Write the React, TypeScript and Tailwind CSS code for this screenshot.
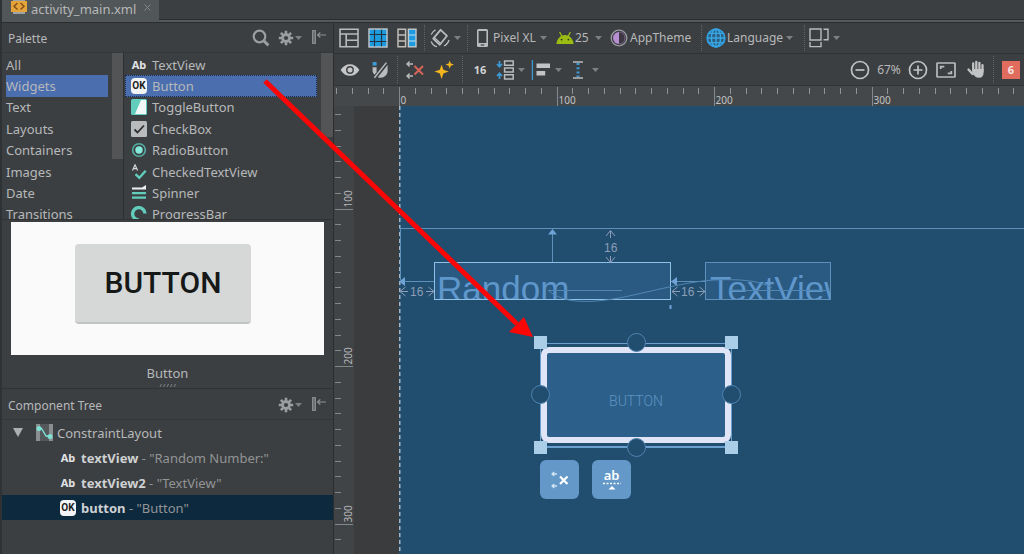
import React from "react";
import { LuX } from "react-icons/lu";

const STEP = 15.75;

const categories = ["All", "Widgets", "Text", "Layouts", "Containers", "Images", "Date", "Transitions"];

function AbIcon() {
  return <span className="w-4 text-center text-[11px] leading-4 font-bold text-[#e0e2e4]">Ab</span>;
}

function OkIcon() {
  return (
    <span className="h-4 w-4 rounded-sm bg-[#f2f4f5] text-center font-['Roboto',sans-serif] text-[10px] leading-4 font-bold text-[#1c1c1c]">
      OK
    </span>
  );
}

function ToggleIcon() {
  return (
    <svg width="16" height="16" viewBox="0 0 16 16" aria-hidden="true">
      <rect width="16" height="16" rx="1.5" fill="#62cdbc" />
      <path d="M10 1h5v14H4z" fill="#f1f8f7" />
    </svg>
  );
}

function CheckBoxIcon() {
  return (
    <svg width="16" height="16" viewBox="0 0 16 16" aria-hidden="true">
      <rect width="16" height="16" rx="1.5" fill="#b9bbbc" />
      <path d="M3.5 8.5l3 3 6.5-7" fill="none" stroke="#2e3032" strokeWidth="1.8" />
    </svg>
  );
}

function RadioIcon() {
  return (
    <svg width="16" height="16" viewBox="0 0 16 16" aria-hidden="true">
      <circle cx="8" cy="8" r="6.3" fill="none" stroke="#55aea4" strokeWidth="1.6" />
      <circle cx="8" cy="8" r="3.7" fill="#84eadb" />
    </svg>
  );
}

function CheckedTextIcon() {
  return (
    <svg width="16" height="16" viewBox="0 0 16 16" aria-hidden="true">
      <path d="M1.5 6.5L4 .8l2.6 5.7M2.4 4.6h3.3" fill="none" stroke="#d5d7d8" strokeWidth="1.2" />
      <path d="M4.5 10.2l3.8 3.6 6.4-7" fill="none" stroke="#62cdbc" strokeWidth="2.4" />
    </svg>
  );
}

function SpinnerIcon() {
  return (
    <svg width="16" height="16" viewBox="0 0 16 16" aria-hidden="true">
      <path d="M1 2.500h10l4-2.500v4.500H1z" fill="#eef0f0" />
      <path d="M1 7h14v2.2H1zM1 11.6h14v2.2H1z" fill="#62cdbc" />
    </svg>
  );
}

function ProgressIcon() {
  return (
    <svg width="16" height="16" viewBox="0 0 16 16" aria-hidden="true">
      <path d="M14 7.5A6.2 6.2 0 1 0 8 14" fill="none" stroke="#62cdbc" strokeWidth="3.4" />
    </svg>
  );
}

const widgets = [
  { name: "TextView", icon: <AbIcon /> },
  { name: "Button", icon: <OkIcon /> },
  { name: "ToggleButton", icon: <ToggleIcon /> },
  { name: "CheckBox", icon: <CheckBoxIcon /> },
  { name: "RadioButton", icon: <RadioIcon /> },
  { name: "CheckedTextView", icon: <CheckedTextIcon /> },
  { name: "Spinner", icon: <SpinnerIcon /> },
  { name: "ProgressBar", icon: <ProgressIcon /> },
];

const tree = [
  { id: "textView", label: "Random Number:", icon: <AbIcon /> },
  { id: "textView2", label: "TextView", icon: <AbIcon /> },
  { id: "button", label: "Button", icon: <OkIcon /> },
];

function Caret() {
  return (
    <svg width="7" height="4" viewBox="0 0 7 4" className="shrink-0" aria-hidden="true">
      <path d="M0 0h7L3.5 4z" fill="#7d8082" />
    </svg>
  );
}

function GearButton() {
  return (
    <button type="button" aria-label="Settings" className="flex items-center gap-px">
      <svg width="16" height="16" viewBox="0 0 16 16" aria-hidden="true">
        <g stroke="#9b9ea0" strokeWidth="2.6">
          <path d="M8 .8v14.4M.8 8h14.4M2.9 2.9l10.2 10.2M13.1 2.9L2.9 13.1" />
        </g>
        <circle cx="8" cy="8" r="4.8" fill="#9b9ea0" />
        <circle cx="8" cy="8" r="2.1" fill="#3c3f41" />
      </svg>
      <Caret />
    </button>
  );
}

function HideButton() {
  return (
    <button type="button" aria-label="Hide">
      <svg width="14" height="14" viewBox="0 0 14 14" aria-hidden="true">
        <rect x=".6" y=".6" width="2.8" height="12.8" fill="#6b6e70" stroke="#909395" strokeWidth="1" />
        <path d="M5.5 5H14M8.3 2.4L5.6 5l2.7 2.6" fill="none" stroke="#909395" strokeWidth="1.2" />
      </svg>
    </button>
  );
}

function Separator() {
  return (
    <div className="flex w-[6px] shrink-0 justify-center self-stretch py-[2px]">
      <div className="border-l border-dotted border-[#606365]" />
    </div>
  );
}

function Tool({ label, className, children }: { label: string; className: string; children: React.ReactNode }) {
  return (
    <button type="button" aria-label={label} className={`flex shrink-0 items-center ${className}`}>
      {children}
    </button>
  );
}

function ConfigBar() {
  return (
    <div className="flex h-[31px] shrink-0 items-center border-b border-[#303234]">
      <Tool label="Design" className="w-[29px] justify-center">
        <svg width="20" height="20" viewBox="0 0 20 20" fill="none" stroke="#b9bbbc" strokeWidth="1.6">
          <path d="M1 1.2h18v17.6H1zM1 6h18M7.2 6v12.8M7.2 12.2H19" />
        </svg>
      </Tool>
      <Tool label="Blueprint" className="w-[29px] justify-center">
        <svg width="20" height="20" viewBox="0 0 20 20">
          <rect x="1" y="1" width="18" height="18" fill="#1d9be0" stroke="#c3c9cc" strokeWidth="1.4" />
          <path d="M6.5 1.7v16.6M13.5 1.7v16.6M1.7 6.5h16.6M1.7 13.5h16.6" stroke="#24323c" strokeWidth="1.1" />
        </svg>
      </Tool>
      <Tool label="Design and blueprint" className="w-[29px] justify-center">
        <svg width="20" height="20" viewBox="0 0 20 20" fill="none">
          <path d="M1 1.2h7.6v17.6H1zM1 7h7.6M1 13h7.6" stroke="#c1beb8" strokeWidth="1.5" />
          <rect x="11.4" y="1.2" width="7.6" height="17.6" fill="#1d9be0" stroke="#c3c9cc" strokeWidth="1.4" />
          <path d="M12 7h6.4M12 13h6.4" stroke="#c3e3f5" strokeWidth="1.2" />
        </svg>
      </Tool>
      <Separator />
      <Tool label="Orientation" className="w-[37px] gap-1 pl-[3px]">
        <svg width="20" height="20" viewBox="0 0 20 20" fill="none" stroke="#b9bbbc">
          <path d="M10.6 1.8l6.4 6-7.2 9-6.6-6.2z" strokeWidth="1.8" strokeLinejoin="round" />
          <path d="M4.2 9.6l6.4 6" strokeWidth="1.4" />
          <path d="M5.6 1.8A9 9 0 0 0 1.2 6.6M19 12a9 9 0 0 1-5 6M1.2 13.4c1 2.7 3 4.6 5.8 5.2" strokeWidth="1.3" />
        </svg>
        <Caret />
      </Tool>
      <Separator />
      <Tool label="Device" className="w-[84px] gap-1 pl-[6px]">
        <svg width="13" height="20" viewBox="0 0 13 20" className="shrink-0">
          <rect x="1" y="1" width="11" height="18" rx="1.6" fill="#b9bbbc" />
          <rect x="2.6" y="3" width="7.8" height="12" fill="#3c3f41" />
          <rect x="4.8" y="16.4" width="3.4" height="1.2" fill="#3c3f41" />
        </svg>
        <span>Pixel XL</span>
        <Caret />
      </Tool>
      <Tool label="API level" className="w-[54px] gap-px pl-[2px]">
        <svg width="18" height="14" viewBox="0 0 18 14" className="shrink-0">
          <path d="M.4 13C.8 8 4.4 4 9 4s8.2 4 8.6 9z" fill="#9bbc13" />
          <path d="M3.6 1l2.2 4M14.4 1l-2.2 4" stroke="#9bbc13" strokeWidth="1.3" />
          <circle cx="5.6" cy="8.6" r=".9" fill="#32351f" />
          <circle cx="12.4" cy="8.6" r=".9" fill="#32351f" />
        </svg>
        <span>25</span>
        <span className="pl-[5px]"><Caret /></span>
      </Tool>
      <Tool label="Theme" className="w-[90px] gap-[2px] pl-[2px]">
        <svg width="18" height="18" viewBox="0 0 18 18" className="shrink-0">
          <circle cx="9" cy="9" r="7.8" fill="#3c3742" stroke="#979aa0" strokeWidth="1.3" />
          <path d="M9 3a6 6 0 0 0 0 12z" fill="#b58fd0" />
          <path d="M9 3a6 6 0 0 1 0 12" fill="none" stroke="#75627f" strokeWidth="1" />
        </svg>
        <span>AppTheme</span>
      </Tool>
      <Separator />
      <Tool label="Language" className="w-[97px] gap-px pl-[2px]">
        <svg width="20" height="20" viewBox="0 0 20 20" fill="none" className="shrink-0">
          <circle cx="10" cy="10" r="8.8" fill="#2b5f80" stroke="#2f9fe0" strokeWidth="1.8" />
          <path d="M10 1v18M1 10h18M2.6 5.4h14.8M2.6 14.6h14.8" stroke="#3aa6e4" strokeWidth="1.4" />
          <ellipse cx="10" cy="10" rx="4.6" ry="9" stroke="#3aa6e4" strokeWidth="1.4" />
        </svg>
        <span>Language</span>
        <span className="pl-[2px]"><Caret /></span>
      </Tool>
      <Separator />
      <Tool label="Layout variants" className="w-[36px] gap-1 pl-[2px]">
        <svg width="20" height="20" viewBox="0 0 20 20" fill="none" stroke="#b9bbbc" strokeWidth="1.4">
          <path d="M1 1h11v11H1zM14.5 1.2H19v10.6h-4.5M1 14v4.6h11V14" />
        </svg>
        <Caret />
      </Tool>
    </div>
  );
}

function ActionBar() {
  return (
    <div className="flex h-8 shrink-0 items-center border-b border-[#303234]">
      <Tool label="View options" className="w-[31px] justify-center">
        <svg width="20" height="14" viewBox="0 0 20 14">
          <path d="M.6 7c4.6-7.800 14.200-7.800 18.800 0-4.600 7.800-14.200 7.800-18.800 0z" fill="#c5c7c8" />
          <circle cx="10" cy="7" r="3.9" fill="#3c3f41" />
          <circle cx="10" cy="7" r="2.5" fill="#c5c7c8" />
        </svg>
      </Tool>
      <Tool label="Autoconnect" className="w-[29px] justify-center">
        <svg width="18" height="18" viewBox="0 0 18 18" fill="none">
          <path d="M1.6 6.2h4v5l-2.2 2.6c-1.2-1.2-1.8-2.6-1.8-4z" fill="#b9bbbc" />
          <path d="M1.6 1h4v3.6h-4z" fill="#3b9ad6" />
          <path d="M15.4 1.6L3.4 16.8" stroke="#b9bbbc" strokeWidth="1.5" />
          <path d="M16.6 4v6c0 4.6-4.8 8.2-9.8 6.2l4.6-5.6z" fill="#b9bbbc" />
        </svg>
      </Tool>
      <Separator />
      <Tool label="Clear constraints" className="w-[29px] justify-center">
        <svg width="20" height="20" viewBox="0 0 20 20" fill="none">
          <path d="M2 4h6M4.6 1.4L2 4l2.6 2.6M2 16h6M4.6 13.4L2 16l2.6 2.6" stroke="#b9bbbc" strokeWidth="1.4" />
          <path d="M9.5 6l8.5 8.5M18 6l-8.5 8.5" stroke="#d9655a" strokeWidth="1.9" />
        </svg>
      </Tool>
      <Tool label="Infer constraints" className="w-[30px] justify-center">
        <svg width="20" height="20" viewBox="0 0 20 20" fill="#f2b51d">
          <path d="M7.6 4.8l1.8 4.9 5.3 1.9-5.3 1.9-1.8 5.500-1.800-5.500L.5 11.600l5.300-1.900z" />
          <path d="M15.7.4l1.1 3 3.2 1.2-3.2 1.2-1.1 3-1.1-3-3.1-1.2 3.1-1.2z" />
        </svg>
      </Tool>
      <Separator />
      <Tool label="Default margin" className="w-[30px] justify-center">
        <span className="text-[11px] font-bold text-[#d2d4d5]">16</span>
      </Tool>
      <Tool label="Pack" className="w-[35px] gap-1 pl-px">
        <svg width="18" height="20" viewBox="0 0 18 20" fill="none">
          <path d="M8.6 1h8.6v4.2H8.6zM8.6 7.9h8.6v4.2H8.6zM8.6 14.8h8.6V19H8.6z" stroke="#b9bbbc" strokeWidth="1.5" />
          <path d="M3.5 1v5.4M1 4l2.5 2.7L6 4M3.5 19v-5.4M1 16l2.5-2.7L6 16" stroke="#3b9ad6" strokeWidth="1.7" />
        </svg>
        <Caret />
      </Tool>
      <Tool label="Align" className="w-[38px] gap-1 pl-px">
        <svg width="20" height="20" viewBox="0 0 20 20">
          <path d="M1.4 0v20" stroke="#3b9ad6" strokeWidth="1.3" />
          <path d="M5.5 3.4H19V8H5.5zM5.5 11h8.7v4.6H5.5z" fill="#c1c3c4" />
        </svg>
        <Caret />
      </Tool>
      <Tool label="Guidelines" className="w-[36px] gap-2 pl-1">
        <svg width="12" height="20" viewBox="0 0 12 20" fill="none">
          <path d="M1 2h10M1 18h10" stroke="#b9bbbc" strokeWidth="1.5" />
          <path d="M6 3v14" stroke="#3b9ad6" strokeWidth="3" strokeDasharray="2 2.2" />
        </svg>
        <Caret />
      </Tool>
      <div className="ml-auto flex items-center self-stretch pr-1">
        <Tool label="Zoom out" className="w-[24px] justify-center">
          <svg width="20" height="20" viewBox="0 0 20 20" fill="none" stroke="#c1c3c4" strokeWidth="1.7">
            <circle cx="10" cy="10" r="8.5" />
            <path d="M5.5 10h9" />
          </svg>
        </Tool>
        <span className="w-[34px] text-center">67%</span>
        <Tool label="Zoom in" className="w-[24px] justify-center">
          <svg width="20" height="20" viewBox="0 0 20 20" fill="none" stroke="#c1c3c4" strokeWidth="1.7">
            <circle cx="10" cy="10" r="8.5" />
            <path d="M5.5 10h9M10 5.5v9" />
          </svg>
        </Tool>
        <Tool label="Zoom to fit" className="w-[32px] justify-center">
          <svg width="20" height="16" viewBox="0 0 20 16" fill="none" stroke="#b9bbbc">
            <rect x="1" y="1" width="18" height="14" rx=".6" strokeWidth="1.7" />
            <path d="M4.7 7V4.7h3.6M15.3 9v2.3h-3.6" strokeWidth="1.8" />
          </svg>
        </Tool>
        <Tool label="Pan" className="w-[28px] justify-center">
          <svg width="18" height="19" viewBox="0 0 18 19" fill="none" stroke="#c1c3c4" strokeLinecap="round" strokeWidth="2.3">
            <path d="M6.2 10V3.4M9.3 10V1.8M12.4 10V2.8M15.5 11V5.2M1.5 9.5l4 4.5" />
            <path d="M5.2 9h11.4v3.8c0 3-1.7 5-4.6 5-3.2 0-4.7-1.6-6.8-5z" fill="#c1c3c4" stroke="none" />
          </svg>
        </Tool>
        <Separator />
        <Tool label="Errors" className="ml-[6px] h-[18px] w-[18px] justify-center bg-[#e06c5e]">
          <span className="text-[11px] font-bold text-[#f6e4e1]">6</span>
        </Tool>
      </div>
    </div>
  );
}

function HorizontalRuler() {
  const last = Math.floor(Math.max(window.innerWidth - 400, 0) / STEP);
  const marks = Array.from({ length: last + 5 }, (_, i) => i - 4);
  return (
    <svg className="h-5 w-full shrink-0 bg-[#45484a]" aria-hidden="true">
      {marks.map((i) => {
        const x = Math.round(65 + i * STEP) + 0.5;
        const major = i % 10 === 0;
        return (
          <g key={i}>
            <path d={`M${x} ${major ? 1 : 2}V${major ? 20 : 8}`} stroke={major ? "#85888a" : "#909395"} />
            {major && (
              <text x={x + 1} y="18" fontSize="10" fill="#c0c2c4">
                {i * 10}
              </text>
            )}
          </g>
        );
      })}
    </svg>
  );
}

function VerticalRuler() {
  const last = Math.floor(Math.max(window.innerHeight - 52, 0) / STEP);
  const marks = Array.from({ length: Math.max(last - 3, 0) }, (_, i) => i + 4);
  return (
    <svg className="h-full w-5 shrink-0 bg-[#414446]" aria-hidden="true">
      {marks.map((i) => {
        const y = Math.round(-54 + i * STEP) - 0.5;
        const major = i % 10 === 0;
        return (
          <g key={i}>
            <path d={`M1 ${y}H${major ? 19 : 7}`} stroke="#85888a" />
            {major && (
              <text transform={`translate(18 ${y - 2}) rotate(-90)`} fontSize="10" fill="#b5b7b9">
                {i * 10}
              </text>
            )}
          </g>
        );
      })}
    </svg>
  );
}

function Wires() {
  return (
    <svg className="absolute inset-0 h-full w-full" fill="none" aria-hidden="true">
      <path d="M0 0V2000" stroke="#a3b8c8" strokeWidth="3" strokeDasharray="4 3" />
      <path d="M0 122.5H4000" stroke="#5e90bb" />
      <path d="M1.5 123V174M1 175.5H35M153.5 124V156M272 175.5H306" stroke="#5e90bb" />
      <path d="M153.5 123l4.5 5.5h-9zM0 175.5l6-4.5v9zM272 175.5l6-4.5v9z" fill="#6fa3d6" />
      <g stroke="#8d9db8" strokeWidth="1">
        <path d="M207 130l4.5-5.5L216 130M211.5 125v7M207 151l4.5 5.5 4.5-5.5M211.5 150v6" />
        <path d="M6.5 181L1 185.5l5.5 4.500M1 185.5h8M29.5 181l5.5 4.5-5.5 4.500M27 185.5h8" />
        <path d="M278.5 181l-5.5 4.5 5.5 4.500M273 185.5h8M300.5 181l5.5 4.5-5.5 4.500M298 185.5h8" />
      </g>
      <path d="M149 184.5h74M331 184.5h101" stroke="#5187b5" />
      <path d="M149 184C165 200 200 196 225 191S290 175 315 174s45 0 58 8" stroke="#5187b5" />
      <path d="M271.5 199v4" stroke="#6fa3d6" strokeWidth="2" />
    </svg>
  );
}

function Dimension({ className }: { className: string }) {
  return (
    <span className={`absolute font-['Liberation_Sans',sans-serif] text-[12px] leading-3 text-[#8d9db8] ${className}`}>
      16
    </span>
  );
}

const corners = [
  "-left-[7px] -top-[8px]",
  "-right-[7px] -top-[8px]",
  "-left-[7px] -bottom-[8px]",
  "-right-[7px] -bottom-[8px]",
];

const anchors = [
  "left-[86px] -top-[11px]",
  "left-[86px] -bottom-[11px]",
  "-left-[10px] top-[41px]",
  "-right-[10px] top-[41px]",
];

function SelectedButton() {
  return (
    <div className="absolute left-[141px] top-[237px] h-[105px] w-[192px] border border-b-2 border-[#6b9fcd] py-[3px]">
      <div className="flex h-full items-center justify-center rounded-lg border-[6px] border-[#dfe4f6] bg-[#2c608a] pt-3 font-['Roboto',sans-serif] text-[14px] font-light text-[#5f93c2]">
        BUTTON
      </div>
      {corners.map((c) => (
        <span key={c} className={`absolute h-[13px] w-[13px] bg-[#aacde8] ${c}`} />
      ))}
      {anchors.map((a) => (
        <span key={a} className={`absolute h-[19px] w-[19px] rounded-full border border-[#4f83b1] bg-[#214d6e] ${a}`} />
      ))}
    </div>
  );
}

function Blueprint() {
  return (
    <div className="relative min-w-0 flex-1 overflow-hidden bg-[#214d6e]">
      <div className="absolute left-[35px] top-[156px] h-[38px] w-[237px] overflow-hidden border border-[#8fc0e8] bg-[#2a5a82] pl-[2px] pt-[6px] font-['Liberation_Sans',sans-serif] text-[35px] leading-10 text-[#5f97cc]">
        Random
      </div>
      <div className="absolute left-[306px] top-[156px] h-[38px] w-[126px] overflow-hidden border border-[#5e90bb] bg-[#2a5a82] pl-[4px] pt-[6px] font-['Liberation_Sans',sans-serif] text-[35px] leading-10 text-[#5f97cc]">
        TextView
      </div>
      <Wires />
      <Dimension className="left-[205px] top-[136px]" />
      <Dimension className="left-[11px] top-[180px]" />
      <Dimension className="left-[282px] top-[180px]" />
      <SelectedButton />
      <div className="absolute left-[141px] top-[354px] flex gap-[13px]">
        <button type="button" aria-label="Delete constraints" className="flex h-[39px] w-[39px] items-center justify-center rounded-md bg-[#6398c8]">
          <svg width="20" height="20" viewBox="0 0 20 20" fill="none" stroke="#fff">
            <path d="M2 4h5M4.3 2L2 4l2.3 2M2 16h5M4.3 14L2 16l2.3 2" strokeWidth="1.3" stroke="#d3e4f3" />
            <path d="M10 6.5l7.5 7.5M17.5 6.5L10 14" strokeWidth="2.2" />
          </svg>
        </button>
        <button type="button" aria-label="Edit baseline" className="flex h-[39px] w-[39px] flex-col items-center justify-center rounded-md bg-[#6398c8]">
          <span className="text-[13px] leading-3 font-semibold text-white">ab</span>
          <svg width="20" height="9" viewBox="0 0 20 9">
            <path d="M1 2.5h18" stroke="#fff" strokeWidth="1.4" strokeDasharray="2 1.5" />
            <path d="M10 5l3.5 3.5h-7z" fill="#fff" />
          </svg>
        </button>
      </div>
    </div>
  );
}

function PanelHeader({ title, search }: { title: string; search?: boolean }) {
  return (
    <div className="flex h-[30px] shrink-0 items-center border-b border-[#35383a] pl-[6px] pr-[7px]">
      <h2 className="flex-1 pt-[2px]">{title}</h2>
      <div className="flex items-center gap-2">
        {search && (
          <button type="button" aria-label="Search">
            <svg width="18" height="18" viewBox="0 0 18 18" fill="none" stroke="#9b9ea0">
              <circle cx="7.5" cy="7.5" r="5.8" strokeWidth="2.2" />
              <path d="M11.8 11.8l4.6 4.6" strokeWidth="3" />
            </svg>
          </button>
        )}
        <GearButton />
        <span className="pl-[2px] leading-none"><HideButton /></span>
      </div>
    </div>
  );
}

function Palette() {
  return (
    <section className="flex shrink-0 flex-col">
      <PanelHeader title="Palette" search />
      <div className="flex h-[167px] overflow-hidden border-b border-[#303234] text-[13px] leading-4">
        <ul className="flex h-[172px] w-[110px] flex-col px-1 pt-px">
          {categories.map((c) => (
            <li key={c} className="flex flex-1">
              <button type="button" className={`flex-1 text-left ${c === "Widgets" ? "bg-[#4b6eaf]" : ""}`}>
                {c}
              </button>
            </li>
          ))}
        </ul>
        <div className="w-3 border-r border-[#2d2f31]">
          <div className="h-[106px] bg-[#525456]" />
        </div>
        <ul className="flex h-[172px] min-w-0 flex-1 flex-col pt-px pl-px pr-1">
          {widgets.map((w) => (
            <li key={w.name} className="flex flex-1">
              <button
                type="button"
                className={`flex flex-1 items-center gap-[5px] border border-dotted pl-[5px] text-left ${
                  w.name === "Button" ? "border-[#1d2c49] bg-[#4b6eaf]" : "border-transparent"
                }`}
              >
                {w.icon}
                <span>{w.name}</span>
              </button>
            </li>
          ))}
        </ul>
        <div className="w-3">
          <div className="h-[84px] bg-[#525456]" />
        </div>
      </div>
      <div className="px-[9px] pt-[2px]">
        <div className="flex h-[133px] justify-center bg-[#fafafa] pt-[22px] pr-[9px]">
          <div className="flex h-20 w-44 items-center justify-center rounded border-b-2 border-[#c2c4c4] bg-[#d6d8d7] font-['Roboto',sans-serif] text-[30px] font-medium text-[#151817]">
            BUTTON
          </div>
        </div>
      </div>
      <p className="pt-2 text-center text-[13px] leading-5">Button</p>
      <div className="flex h-[6px] items-center justify-center border-b border-[#303234]">
        <svg width="18" height="5" viewBox="0 0 18 5" aria-hidden="true">
          <path d="M1 4l1.500-3M4.500 4L6 1M8 4l1.500-3M11.500 4L13 1M15 4l1.500-3" stroke="#828587" fill="none" />
        </svg>
      </div>
    </section>
  );
}

function ComponentTree() {
  return (
    <section className="flex min-h-0 flex-1 flex-col pt-px">
      <PanelHeader title="Component Tree" />
      <ul className="text-[13px] leading-5">
        <li>
          <button type="button" className="flex h-[25px] w-full items-center pl-[11px]">
            <svg width="10" height="9" viewBox="0 0 10 9" aria-hidden="true">
              <path d="M0 0h10L5 9z" fill="#adafb1" />
            </svg>
            <svg width="17" height="17" viewBox="0 0 17 17" className="ml-[13px]" aria-hidden="true">
              <rect width="17" height="17" fill="#55585a" />
              <path d="M0 0h4v17H0zM13 0h4v17h-4z" fill="#8b8e90" />
              <path d="M3 4.5h2.5L10 12h4" stroke="#7ce0d3" strokeWidth="1.4" fill="none" />
              <circle cx="3" cy="4.5" r="2.5" fill="#7ce0d3" />
              <circle cx="14" cy="12.5" r="2.5" fill="#7ce0d3" />
            </svg>
            <span className="ml-1">ConstraintLayout</span>
          </button>
        </li>
        {tree.map((n) => (
          <li key={n.id}>
            <button
              type="button"
              className={`flex h-[25px] w-full items-center gap-[5px] pl-[58px] ${n.id === "button" ? "bg-[#0d293e]" : ""}`}
            >
              {n.icon}
              <span className="text-[#929496]">
                <b className="text-[#cfd1d3]">{n.id}</b> - "{n.label}"
              </span>
            </button>
          </li>
        ))}
      </ul>
    </section>
  );
}

export default function App() {
  return (
    <div className="relative flex h-screen flex-col overflow-hidden border-l-2 border-[#2f3234] bg-[#3c3f41] font-['Noto_Sans',sans-serif] text-[12px] leading-4 text-[#b6b8ba]">
      <header className="flex h-[23px] shrink-0 border-b border-[#2b2d2f]">
        <div className="flex w-[157px] shrink-0 items-start bg-[#515658] pl-[9px]">
          <svg width="16" height="15" viewBox="0 0 16 15" aria-hidden="true">
            <path d="M2 0h12v14H2z" fill="#9da4a8" />
            <path d="M0 1h16v11H0z" fill="#e5a33b" />
            <path d="M6.5 3L3 6.2l3.5 3.2M9.5 3L13 6.2 9.5 9.4" stroke="#7d4d17" strokeWidth="1.4" fill="none" />
          </svg>
          <span className="pl-1 text-[13px] leading-[18px]">activity_main.xml</span>
          <button type="button" aria-label="Close tab" className="ml-auto pt-[2px] pr-[6px] text-[#8b8e90]">
            <LuX size={11} />
          </button>
        </div>
        <div className="flex flex-1 flex-col justify-end">
          <div className="h-[3px] border-t border-[#2b2d2f] bg-[#555859]" />
        </div>
      </header>
      <main className="flex min-h-0 flex-1">
        <aside className="flex w-[332px] shrink-0 flex-col border-r border-[#2b2d2f]">
          <Palette />
          <ComponentTree />
        </aside>
        <section className="flex min-w-0 flex-1 flex-col">
          <ConfigBar />
          <ActionBar />
          <HorizontalRuler />
          <div className="flex min-h-0 flex-1">
            <VerticalRuler />
            <div className="w-[45px] shrink-0 bg-[#3a3c3e]" />
            <Blueprint />
          </div>
        </section>
      </main>
      <svg className="pointer-events-none absolute inset-0 h-full w-full" aria-hidden="true">
        <path d="M263 81L515 324" stroke="#f90606" strokeWidth="5" />
        <path d="M531 337l-24-5 15-15z" fill="#f90606" />
      </svg>
    </div>
  );
}
